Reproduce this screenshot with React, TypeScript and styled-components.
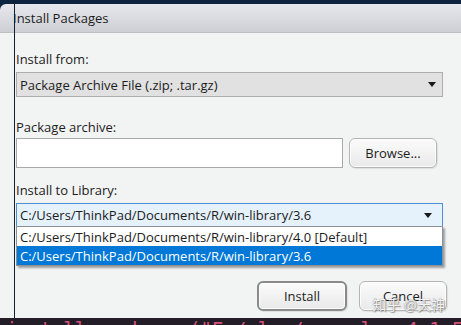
import React from "react";
import styled, { createGlobalStyle } from "styled-components";

const GlobalStyle = createGlobalStyle`
  html, body {
    margin: 0;
    padding: 0;
  }
  body {
    width: 461px;
    height: 325px;
    overflow: hidden;
    background: #f2f3f3;
    font-family: "Open Sans", "Noto Sans", "Liberation Sans", sans-serif;
    color: #1c1c1c;
  }
`;

const Screen = styled.div`
  position: relative;
  width: 461px;
  height: 325px;
  display: flex;
  flex-direction: column;
  overflow: hidden;
  background: #0c2440;
`;

const TopEdge = styled.div`
  height: 4px;
  flex: none;
`;

const TitleBar = styled.div`
  height: 28px;
  flex: none;
  display: flex;
  align-items: center;
  padding-left: 13px;
  font-size: 13px;
  border-top-left-radius: 6px;
  background: linear-gradient(#e7e8ed, #cecfd4);
  border-bottom: 1px solid #bfc0c4;
`;

const Body = styled.div`
  flex: 1;
  display: flex;
  flex-direction: column;
  padding: 0 14px 0 16px;
  background: #f2f3f3;
`;

const Label = styled.div<{ $top: number; $gap: number }>`
  font-size: 13px;
  line-height: 16px;
  margin-top: ${p => p.$top}px;
  margin-bottom: ${p => p.$gap}px;
`;

const Select = styled.div<{ $focused?: boolean }>`
  position: relative;
  margin-right: 4px;
  height: ${p => (p.$focused ? 24 : 25)}px;
  box-sizing: border-box;
  display: flex;
  align-items: center;
  padding: 0 ${p => (p.$focused ? 10 : 6)}px 0 3px;
  font-size: 13px;
  background: ${p => (p.$focused ? "#e5f1fb" : "#e1e1e1")};
  border: 1px solid ${p => (p.$focused ? "#4c8fd2" : "#adadad")};
`;

const SelectText = styled.span`
  flex: 1;
  white-space: nowrap;
`;

const Arrow = () => (
  <svg width="8" height="5" viewBox="0 0 8 5">
    <polygon points="0,0 8,0 4,5" fill="#1a1a1a" />
  </svg>
);

const InputRow = styled.div`
  display: flex;
  gap: 6px;
  margin-right: 10px;
  height: 30px;
`;

const TextInput = styled.div`
  flex: 1;
  box-sizing: border-box;
  background: #ffffff;
  border: 1px solid #a9a9a9;
`;

const Button = styled.button<{ $width: number; $default?: boolean }>`
  width: ${p => p.$width}px;
  height: 30px;
  box-sizing: border-box;
  font-family: inherit;
  font-size: 13px;
  color: #1c1c1c;
  border-radius: 6px;
  border: ${p => (p.$default ? "2px solid #8a8a8a" : "1px solid #b4b4b4")};
  background: linear-gradient(#fbfbfb, #e9e9e9);
  box-shadow: inset 0 0 0 1px rgba(255, 255, 255, 0.8), 1px 1px 1px rgba(0, 0, 0, 0.08);
  padding: 0;
`;

const DropList = styled.div`
  position: absolute;
  top: 100%;
  left: -1px;
  right: -1px;
  background: #ffffff;
  border: 1px solid #8d9095;
  box-shadow: 2px 2px 2px rgba(0, 0, 0, 0.35);
  z-index: 2;
`;

const Option = styled.div<{ $active?: boolean }>`
  height: 19px;
  display: flex;
  align-items: center;
  padding-left: 3px;
  font-size: 13px;
  white-space: nowrap;
  background: ${p => (p.$active ? "#0078d7" : "transparent")};
  color: ${p => (p.$active ? "#ffffff" : "#1c1c1c")};
`;

const ButtonRow = styled.div`
  display: flex;
  justify-content: flex-end;
  gap: 12px;
  margin-top: 54px;
`;

const Console = styled.div`
  height: 7px;
  flex: none;
  overflow: hidden;
  background: #221d26;
  font-family: "DejaVu Sans Mono", monospace;
  font-size: 19px;
  line-height: 20px;
  color: #d8507c;
  white-space: nowrap;
  padding-left: 6px;
`;

const ConsoleText = styled.div`
  margin-top: 1px;
`;

const Cursor = styled.div`
  position: absolute;
  left: 14px;
  top: 0;
  width: 1px;
  height: 318px;
  background: #142030;
  z-index: 3;
`;

const Watermark = styled.div`
  position: absolute;
  right: 16px;
  top: 295px;
  font-family: "Noto Sans CJK SC", sans-serif;
  font-size: 14px;
  line-height: 18px;
  color: rgba(255, 255, 255, 0.92);
  text-shadow: 0 0 1px #6d6d6d, 1px 1px 1px rgba(0, 0, 0, 0.35);
  z-index: 4;
`;

export default function App() {
  return (
    <>
      <GlobalStyle />
      <Screen>
        <TopEdge />
        <TitleBar>Install Packages</TitleBar>
        <Body>
          <Label $top={18} $gap={5}>Install from:</Label>
          <Select>
            <SelectText>Package Archive File (.zip; .tar.gz)</SelectText>
            <Arrow />
          </Select>
          <Label $top={22} $gap={3}>Package archive:</Label>
          <InputRow>
            <TextInput />
            <Button $width={88}>Browse...</Button>
          </InputRow>
          <Label $top={14} $gap={5}>Install to Library:</Label>
          <Select $focused>
            <SelectText>C:/Users/ThinkPad/Documents/R/win-library/3.6</SelectText>
            <Arrow />
            <DropList>
              <Option>C:/Users/ThinkPad/Documents/R/win-library/4.0 [Default]</Option>
              <Option $active>C:/Users/ThinkPad/Documents/R/win-library/3.6</Option>
            </DropList>
          </Select>
          <ButtonRow>
            <Button $width={90} $default>Install</Button>
            <Button $width={88}>Cancel</Button>
          </ButtonRow>
        </Body>
        <Console>
          <ConsoleText>install.packages("E:/xlsx/openxlsx_4.1.5.zip", repos = NULL)</ConsoleText>
        </Console>
        <Cursor />
        <Watermark>知乎 @天神</Watermark>
      </Screen>
    </>
  );
}
